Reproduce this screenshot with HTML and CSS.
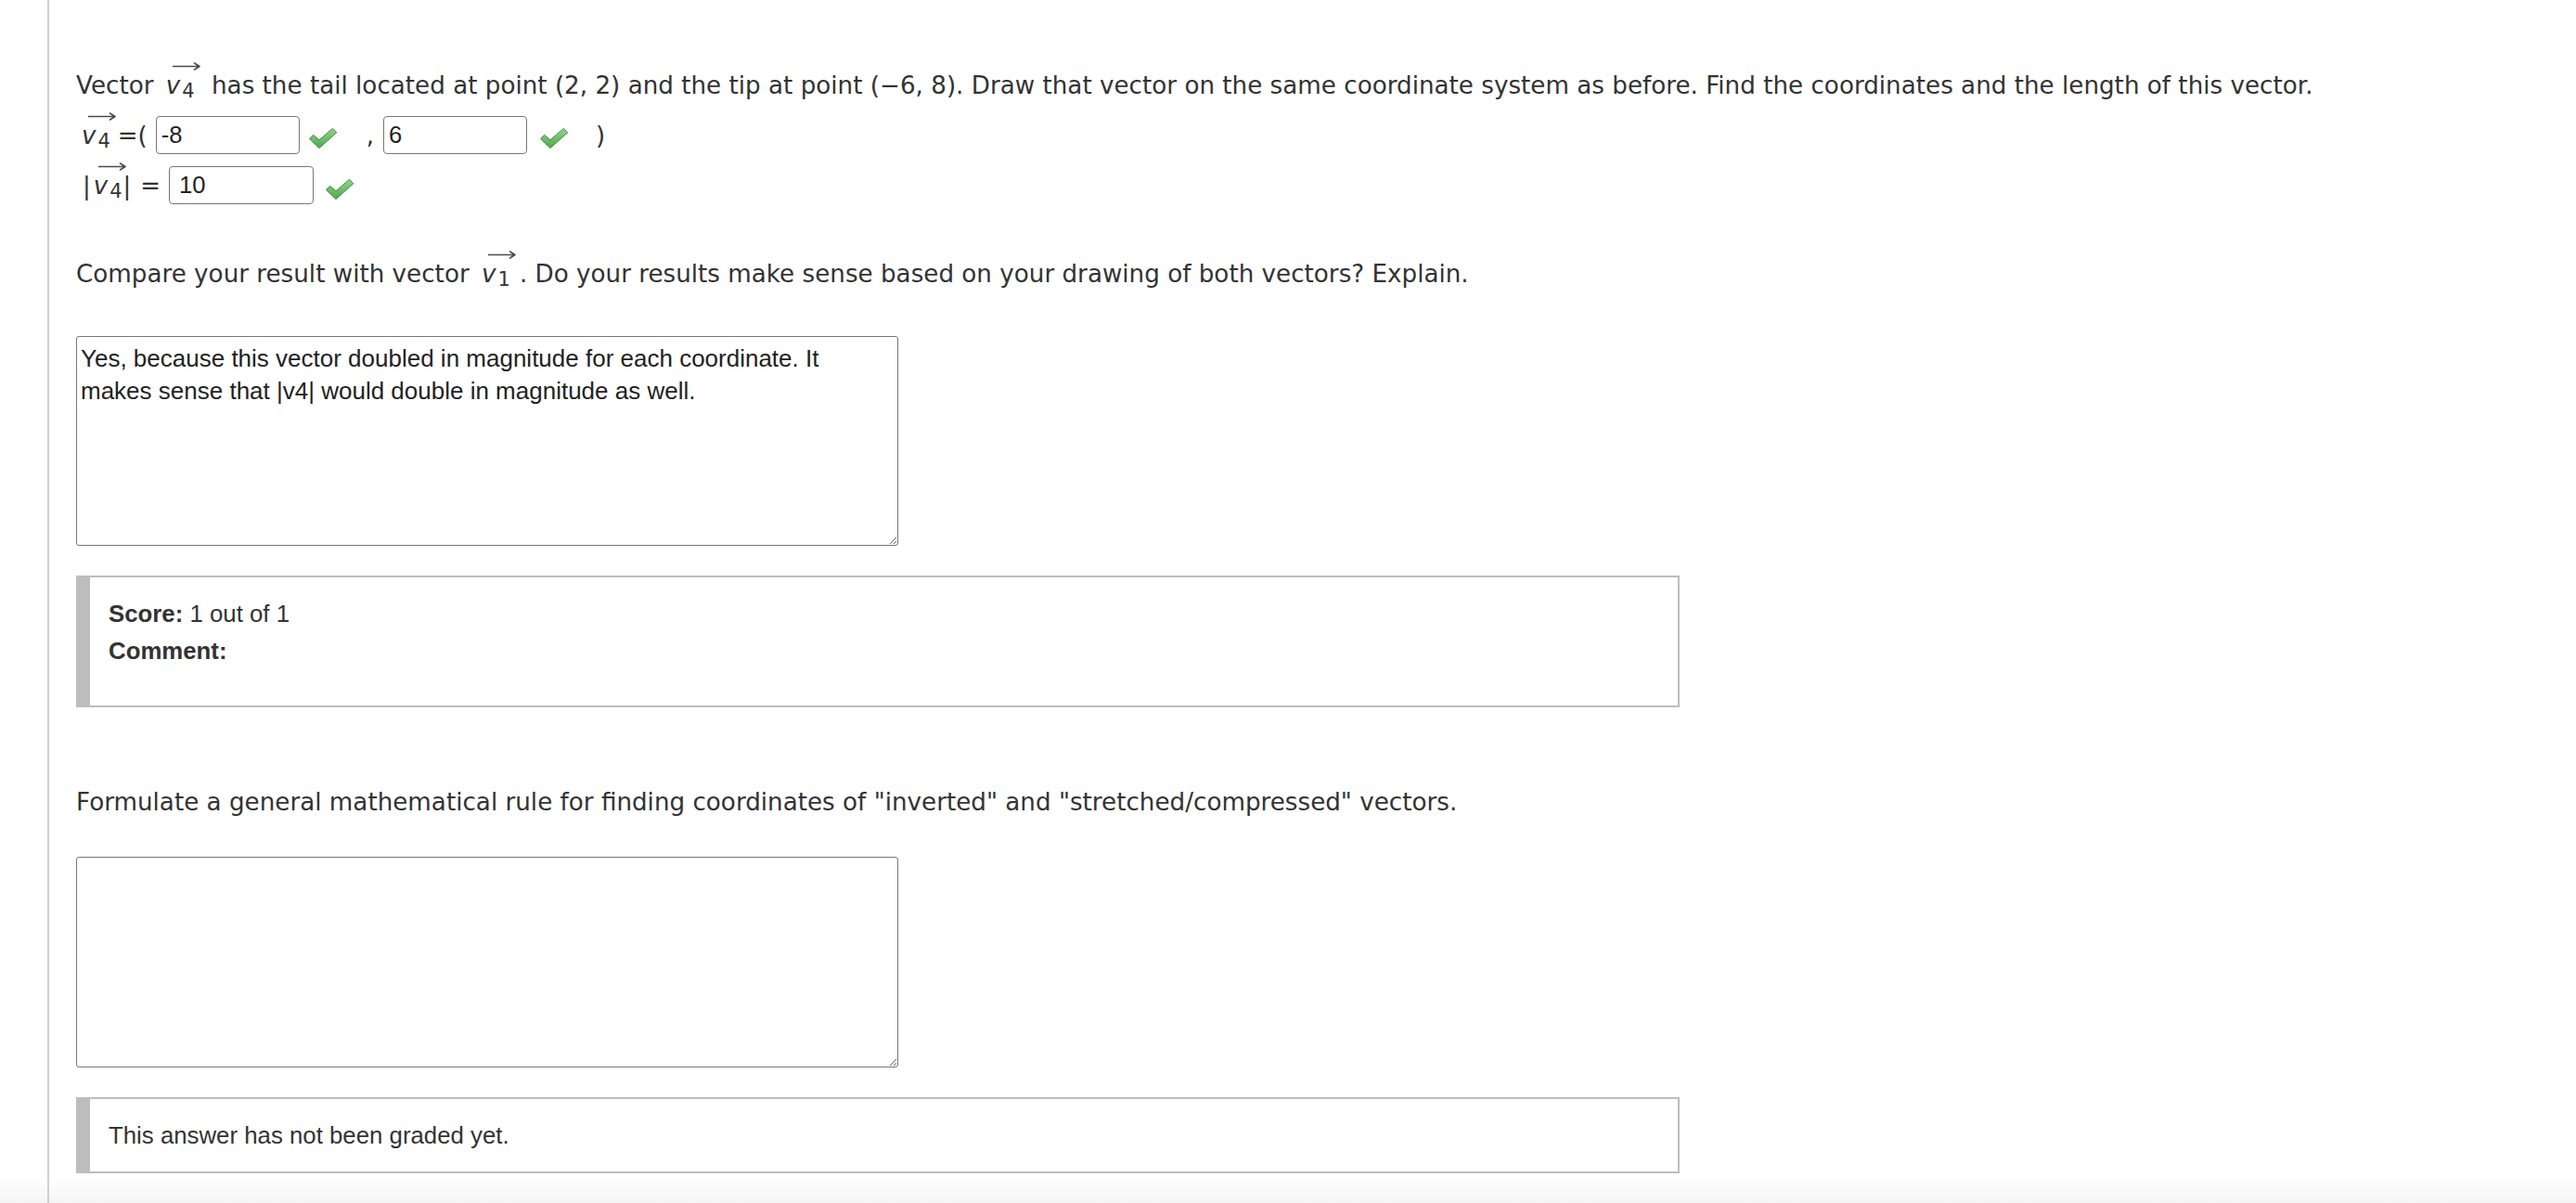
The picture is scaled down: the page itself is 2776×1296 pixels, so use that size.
FILE: index.html
```html
<!DOCTYPE html>
<html lang="en">
<head>
<meta charset="utf-8">
<title>Vector question</title>
<link rel="stylesheet" href="styles.css">
</head>
<body>
<svg class="defs" width="0" height="0" aria-hidden="true">
  <defs>
    <linearGradient id="chk-grad" x1="0" y1="0" x2="0" y2="1">
      <stop offset="0" stop-color="#93d591"/>
      <stop offset="1" stop-color="#4fa64d"/>
    </linearGradient>
  </defs>
</svg>
<div class="page">
  <p class="q-text q-first">Vector <span class="vec"><svg class="vec-arrow" viewBox="0 0 30 10"><path d="M0 5.5H28.5M23.5 2L29 5.5L23.5 9"/></svg><i>v</i><span class="sub">4</span></span> has the tail located at point (2, 2) and the tip at point (−6, 8). Draw that vector on the same coordinate system as before. Find the coordinates and the length of this vector.</p>

  <div class="answer-row row-coords">
    <span class="vec vec-label"><svg class="vec-arrow" viewBox="0 0 30 10"><path d="M0 5.5H28.5M23.5 2L29 5.5L23.5 9"/></svg><i>v</i><span class="sub">4</span></span>
    <span class="op">=(</span>
    <input class="ans-input" type="text" value="-8" readonly>
    <svg class="check" viewBox="0 0 32 24"><path d="M1.5 12.5L5.8 8.4L12 13.8L26.4 1.4L30.8 5.8L12 22.6Z"/></svg>
    <span class="comma">,</span>
    <input class="ans-input ans-second" type="text" value="6" readonly>
    <svg class="check check-second" viewBox="0 0 32 24"><path d="M1.5 12.5L5.8 8.4L12 13.8L26.4 1.4L30.8 5.8L12 22.6Z"/></svg>
    <span class="paren">)</span>
  </div>

  <div class="answer-row row-length">
    <span class="bar">|</span><span class="vec vec-norm"><svg class="vec-arrow" viewBox="0 0 30 10"><path d="M0 5.5H28.5M23.5 2L29 5.5L23.5 9"/></svg><i>v</i><span class="sub">4</span></span><span class="bar bar-close">|</span>
    <span class="op op-eq">=</span>
    <input class="ans-input ans-length" type="text" value="10" readonly>
    <svg class="check check-length" viewBox="0 0 32 24"><path d="M1.5 12.5L5.8 8.4L12 13.8L26.4 1.4L30.8 5.8L12 22.6Z"/></svg>
  </div>

  <p class="q-text q-compare">Compare your result with vector <span class="vec"><svg class="vec-arrow" viewBox="0 0 30 10"><path d="M0 5.5H28.5M23.5 2L29 5.5L23.5 9"/></svg><i>v</i><span class="sub">1</span></span>. Do your results make sense based on your drawing of both vectors? Explain.</p>

  <textarea class="essay essay-first" readonly>Yes, because this vector doubled in magnitude for each coordinate. It makes sense that |v4| would double in magnitude as well.</textarea>

  <div class="grade-box">
    <p><b>Score:</b> 1 out of 1</p>
    <p><b>Comment:</b></p>
  </div>

  <p class="q-text q-formulate">Formulate a general mathematical rule for finding coordinates of "inverted" and "stretched/compressed" vectors.</p>

  <textarea class="essay essay-second"></textarea>

  <div class="grade-box grade-pending">
    <p>This answer has not been graded yet.</p>
  </div>
</div>
</body>
</html>
```

FILE: styles.css
```css
* {
  box-sizing: border-box;
}

html,
body {
  margin: 0;
  padding: 0;
}

body {
  min-height: 1296px;
  background: linear-gradient(to bottom, #ffffff 0, #ffffff 1268px, #f5f5f5 1296px);
  font-family: "DejaVu Sans", Verdana, sans-serif;
  color: #333333;
}

.defs {
  position: absolute;
  width: 0;
  height: 0;
  overflow: hidden;
}

.page {
  margin-left: 51px;
  min-height: 1296px;
  border-left: 2px solid #cfcfcf;
  padding: 74px 0 0 29px;
}

/* question text */
.q-text {
  margin: 0;
  font-size: 26.2px;
  line-height: 36px;
  white-space: nowrap;
}

.q-compare {
  margin-top: 57px;
}

.q-formulate {
  margin-top: 84px;
}

/* vector notation */
.vec {
  position: relative;
  display: inline-block;
  margin: 0 10px 0 5px;
  line-height: 36px;
}

.vec i {
  font-style: italic;
}

.vec .sub {
  font-size: 21px;
  line-height: 0;
  margin-left: 2px;
  vertical-align: -4px;
}

.vec-arrow {
  position: absolute;
  left: 7px;
  top: -8px;
  width: 30px;
  height: 10px;
  fill: none;
  stroke: #4a4a4a;
  stroke-width: 1.5;
  stroke-linecap: round;
  stroke-linejoin: round;
}

/* answer rows */
.answer-row {
  display: flex;
  align-items: center;
  height: 41px;
  font-size: 26px;
  line-height: 36px;
}

.row-coords {
  margin-top: 15px;
}

.row-length {
  margin-top: 13px;
}

.vec-label {
  margin: 0 0 0 6px;
}

.op {
  margin-left: 8px;
}

.ans-input {
  width: 155px;
  height: 41px;
  margin: 0 0 0 9px;
  padding: 0 5px;
  border: 1px solid #777777;
  border-radius: 4px;
  background: #ffffff;
  font-family: "Liberation Sans", Arial, sans-serif;
  font-size: 25.6px;
  color: #222222;
  outline: none;
}

.ans-second {
  margin-left: 10px;
}

.check {
  width: 32px;
  height: 24px;
  margin: 6px 0 0 9px;
  flex: none;
}

.check path {
  fill: url(#chk-grad);
  stroke: #3f8e3d;
  stroke-width: 1;
  stroke-linejoin: round;
}

.check-second {
  margin-left: 13px;
}

.comma {
  margin-left: 31px;
}

.paren {
  margin-left: 29px;
}

.bar {
  margin-left: 7px;
}

.vec-norm {
  margin: 0 0 0 3px;
}

.vec-norm .vec-arrow {
  left: 5px;
}

.bar-close {
  margin-left: 1px;
}

.op-eq {
  margin-left: 10px;
}

.ans-length {
  width: 156px;
  margin-left: 9px;
  padding-left: 10px;
}

.check-length {
  margin: 8px 0 0 12px;
}

/* essay boxes */
.essay {
  display: block;
  width: 886px;
  height: 226px;
  margin: 49px 0 0 0;
  padding: 6px 4px;
  border: 1px solid #767676;
  border-radius: 3px;
  background: #ffffff;
  font-family: "Liberation Sans", Arial, sans-serif;
  font-size: 26px;
  line-height: 35px;
  color: #222222;
  outline: none;
}

.essay-second {
  height: 227px;
  margin-top: 41px;
}

/* grading boxes */
.grade-box {
  width: 1728px;
  margin-top: 32px;
  border: 2px solid #bdbdbd;
  border-left-width: 15px;
  padding: 19px 20px 39px;
  font-family: "Liberation Sans", Arial, sans-serif;
  font-size: 25.8px;
  line-height: 40px;
  color: #333333;
}

.grade-box p {
  margin: 0;
}

.grade-pending {
  padding-bottom: 19px;
}
```
